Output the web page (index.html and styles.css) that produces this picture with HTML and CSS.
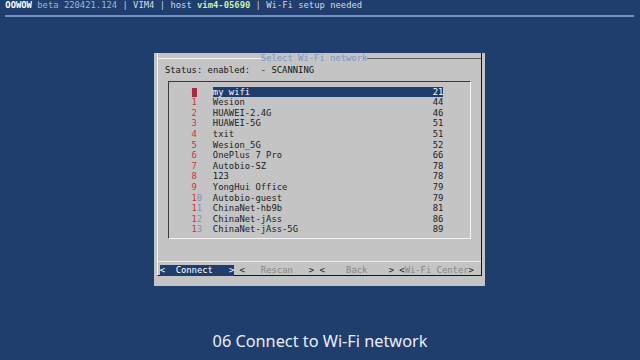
FILE: index.html
```html
<!DOCTYPE html>
<html lang="en">
<head>
    <meta charset="UTF-8">
    <title>OOWOW - Wi-Fi setup</title>
    <link rel="stylesheet" href="styles.css">
</head>
<body>
    <div class="topbar"><span class="brand">OOWOW</span> <span class="ver">beta 220421.124</span> <span class="pipe">|</span> VIM4 <span class="pipe">|</span> host <span class="hostname">vim4-05690</span> <span class="pipe">|</span> Wi-Fi setup needed</div>
    <div class="rule"></div>

    <div class="dialog">
        <div class="frame">
            <div class="title"><span>Select Wi-Fi network</span></div>
            <div class="status">Status: enabled:  - SCANNING</div>

            <div class="list">
                <div class="item sel"><span class="tag"><span class="cursor">0</span></span><span class="name"><span>my wifi</span><span>21</span></span></div>
                <div class="item"><span class="tag">1</span><span class="name"><span>Wesion</span><span>44</span></span></div>
                <div class="item"><span class="tag">2</span><span class="name"><span>HUAWEI-2.4G</span><span>46</span></span></div>
                <div class="item"><span class="tag">3</span><span class="name"><span>HUAWEI-5G</span><span>51</span></span></div>
                <div class="item"><span class="tag">4</span><span class="name"><span>txit</span><span>51</span></span></div>
                <div class="item"><span class="tag">5</span><span class="name"><span>Wesion_5G</span><span>52</span></span></div>
                <div class="item"><span class="tag">6</span><span class="name"><span>OnePlus 7 Pro</span><span>66</span></span></div>
                <div class="item"><span class="tag">7</span><span class="name"><span>Autobio-SZ</span><span>78</span></span></div>
                <div class="item"><span class="tag">8</span><span class="name"><span>123</span><span>78</span></span></div>
                <div class="item"><span class="tag">9</span><span class="name"><span>YongHui Office</span><span>79</span></span></div>
                <div class="item"><span class="tag">1<em>0</em></span><span class="name"><span>Autobio-guest</span><span>79</span></span></div>
                <div class="item"><span class="tag">1<em>1</em></span><span class="name"><span>ChinaNet-hb9b</span><span>81</span></span></div>
                <div class="item"><span class="tag">1<em>2</em></span><span class="name"><span>ChinaNet-jAss</span><span>86</span></span></div>
                <div class="item"><span class="tag">1<em>3</em></span><span class="name"><span>ChinaNet-jAss-5G</span><span>89</span></span></div>
            </div>

            <div class="sep"></div>
            <div class="buttons">
                <span class="btn active">&lt;  <span class="lbl">Connect</span>   &gt;</span>
                <span class="btn">&lt;   <span class="lbl">Rescan</span>   &gt;</span>
                <span class="btn">&lt;    <span class="lbl">Back</span>    &gt;</span>
                <span class="btn">&lt;<span class="lbl">Wi-Fi Center</span>&gt;</span>
            </div>
        </div>
    </div>

    <div class="caption">06 Connect to Wi-Fi network</div>
</body>
</html>
```

FILE: styles.css
```css
body {
    margin: 0;
    width: 640px;
    height: 360px;
    overflow: hidden;
    background-color: #1f3e6d;
    font-family: "DejaVu Sans Mono", monospace;
    font-size: 8.86px;
    line-height: 10.6px;
    color: #1c1c1c;
}
.topbar {
    height: 10.6px;
    padding-left: 1ch;
    white-space: pre;
    color: #d4dbe7;
}
.brand {
    color: #ffffff;
    font-weight: bold;
}
.ver {
    color: #9fb6d6;
}
.pipe {
    color: #c6cfdd;
}
.hostname {
    color: #cdeeaa;
    font-weight: bold;
}
.rule {
    height: 2px;
    margin: 4px 6px 0 5px;
    background-color: #6f90c4;
}
.dialog {
    box-sizing: border-box;
    width: 62ch;
    height: 233.2px;
    margin: 36.4px 0 0 29ch;
    padding-top: 5.3px;
    background-color: #c4c4c4;
}
.frame {
    box-sizing: border-box;
    height: 222.6px;
    margin: 0 0.5ch;
    border-left: 1px solid #f2f2f2;
    border-right: 1px solid #161616;
    border-bottom: 1px solid #161616;
}
.title {
    display: flex;
    align-items: center;
    height: 10.6px;
    margin-top: -5.3px;
}
.title::before,
.title::after {
    content: "";
    height: 1px;
}
.title::before {
    width: 19.3ch;
    background-color: #f2f2f2;
}
.title::after {
    flex: 1;
    background-color: #5a5a5a;
}
.title span {
    color: #7896c4;
    white-space: pre;
}
.status {
    padding-left: 1.3ch;
    margin-top: 1px;
    white-space: pre;
    color: #141414;
}
.list {
    margin: 6px 10px 0 1.8ch;
    padding: 4.5px 0 3.3px;
    border: 1px solid;
    border-color: #3a3a3a #f4f4f4 #f4f4f4 #3a3a3a;
}
.item {
    display: flex;
    height: 10.6px;
    padding-left: 4.3ch;
    white-space: pre;
}
.tag {
    width: 4ch;
    color: #c8343c;
}
.tag em {
    font-style: normal;
    color: #7a92bc;
}
.cursor {
    display: inline-block;
    width: 1ch;
    height: 9px;
    margin-top: 1px;
    background-color: #a82a42;
    color: #a82a42;
}
.name {
    display: flex;
    justify-content: space-between;
    width: 43.3ch;
}
.item.sel .name {
    background-color: #1f3e6d;
    color: #ffffff;
}
.sep {
    height: 1px;
    margin-top: 21.6px;
    background-color: #ececec;
}
.buttons {
    display: flex;
    gap: 1ch;
    margin-top: 3.5px;
    padding-left: 0.3ch;
    height: 10.6px;
}
.btn {
    white-space: pre;
    color: #1a1a1a;
}
.btn .lbl {
    color: #858585;
}
.btn.active {
    background-color: #1f3e6d;
    color: #ffffff;
}
.btn.active .lbl {
    color: #ffffff;
}
.caption {
    margin-top: 44.8px;
    text-align: center;
    font-family: "Noto Sans", sans-serif;
    font-size: 16.3px;
    line-height: 20px;
    color: #e9eef8;
}
```
